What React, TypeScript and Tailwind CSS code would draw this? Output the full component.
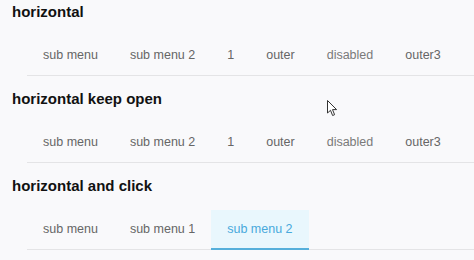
import React from 'react';

type Item = { label: string; disabled?: boolean; active?: boolean };

const full: Item[] = [
  { label: 'sub menu' },
  { label: 'sub menu 2' },
  { label: '1' },
  { label: 'outer' },
  { label: 'disabled', disabled: true },
  { label: 'outer3' },
];

const click: Item[] = [
  { label: 'sub menu' },
  { label: 'sub menu 1' },
  { label: 'sub menu 2', active: true },
];

function Menu({ items }: { items: Item[] }) {
  return (
    <ul className="ml-[27px] flex border-b border-[#e4e4e6]">
      {items.map((it) => (
        <li
          key={it.label}
          className={
            it.active
              ? '-mb-px h-10 border-b-2 border-[#55afdb] bg-[#e9f7fd] px-4 leading-[38px] text-[#48a9dc]'
              : it.disabled
                ? '-mb-px h-10 border-b-2 border-transparent px-4 leading-[38px] text-[#7a7a7a]'
                : '-mb-px h-10 border-b-2 border-transparent px-4 leading-[38px] text-[#666]'
          }
        >
          {it.label}
        </li>
      ))}
    </ul>
  );
}

function Section({ title, items }: { title: string; items: Item[] }) {
  return (
    <section className="mb-3">
      <h3 className="mb-[13px] pl-3 text-[15px] font-bold leading-[22px] text-[#111]">{title}</h3>
      <Menu items={items} />
    </section>
  );
}

export default function App() {
  return (
    <div
      className="relative h-[260px] w-[474px] overflow-hidden bg-[#f9f9fb] pt-px text-[12.5px]"
      style={{ fontFamily: '"Liberation Sans", Arial, sans-serif' }}
    >
      <Section title="horizontal" items={full} />
      <Section title="horizontal keep open" items={full} />
      <Section title="horizontal and click" items={click} />

      {/* mouse pointer */}
      <svg className="absolute left-[327px] top-[100px]" width="12" height="17" viewBox="0 0 12 17">
        <path
          d="M0.5 0.5 L0.5 13 L3.5 10.3 L5.6 15.5 L7.6 14.7 L5.5 9.6 L9.6 9.6 Z"
          fill="#fff"
          stroke="#333"
          strokeWidth="1"
          strokeLinejoin="round"
        />
      </svg>
    </div>
  );
}
